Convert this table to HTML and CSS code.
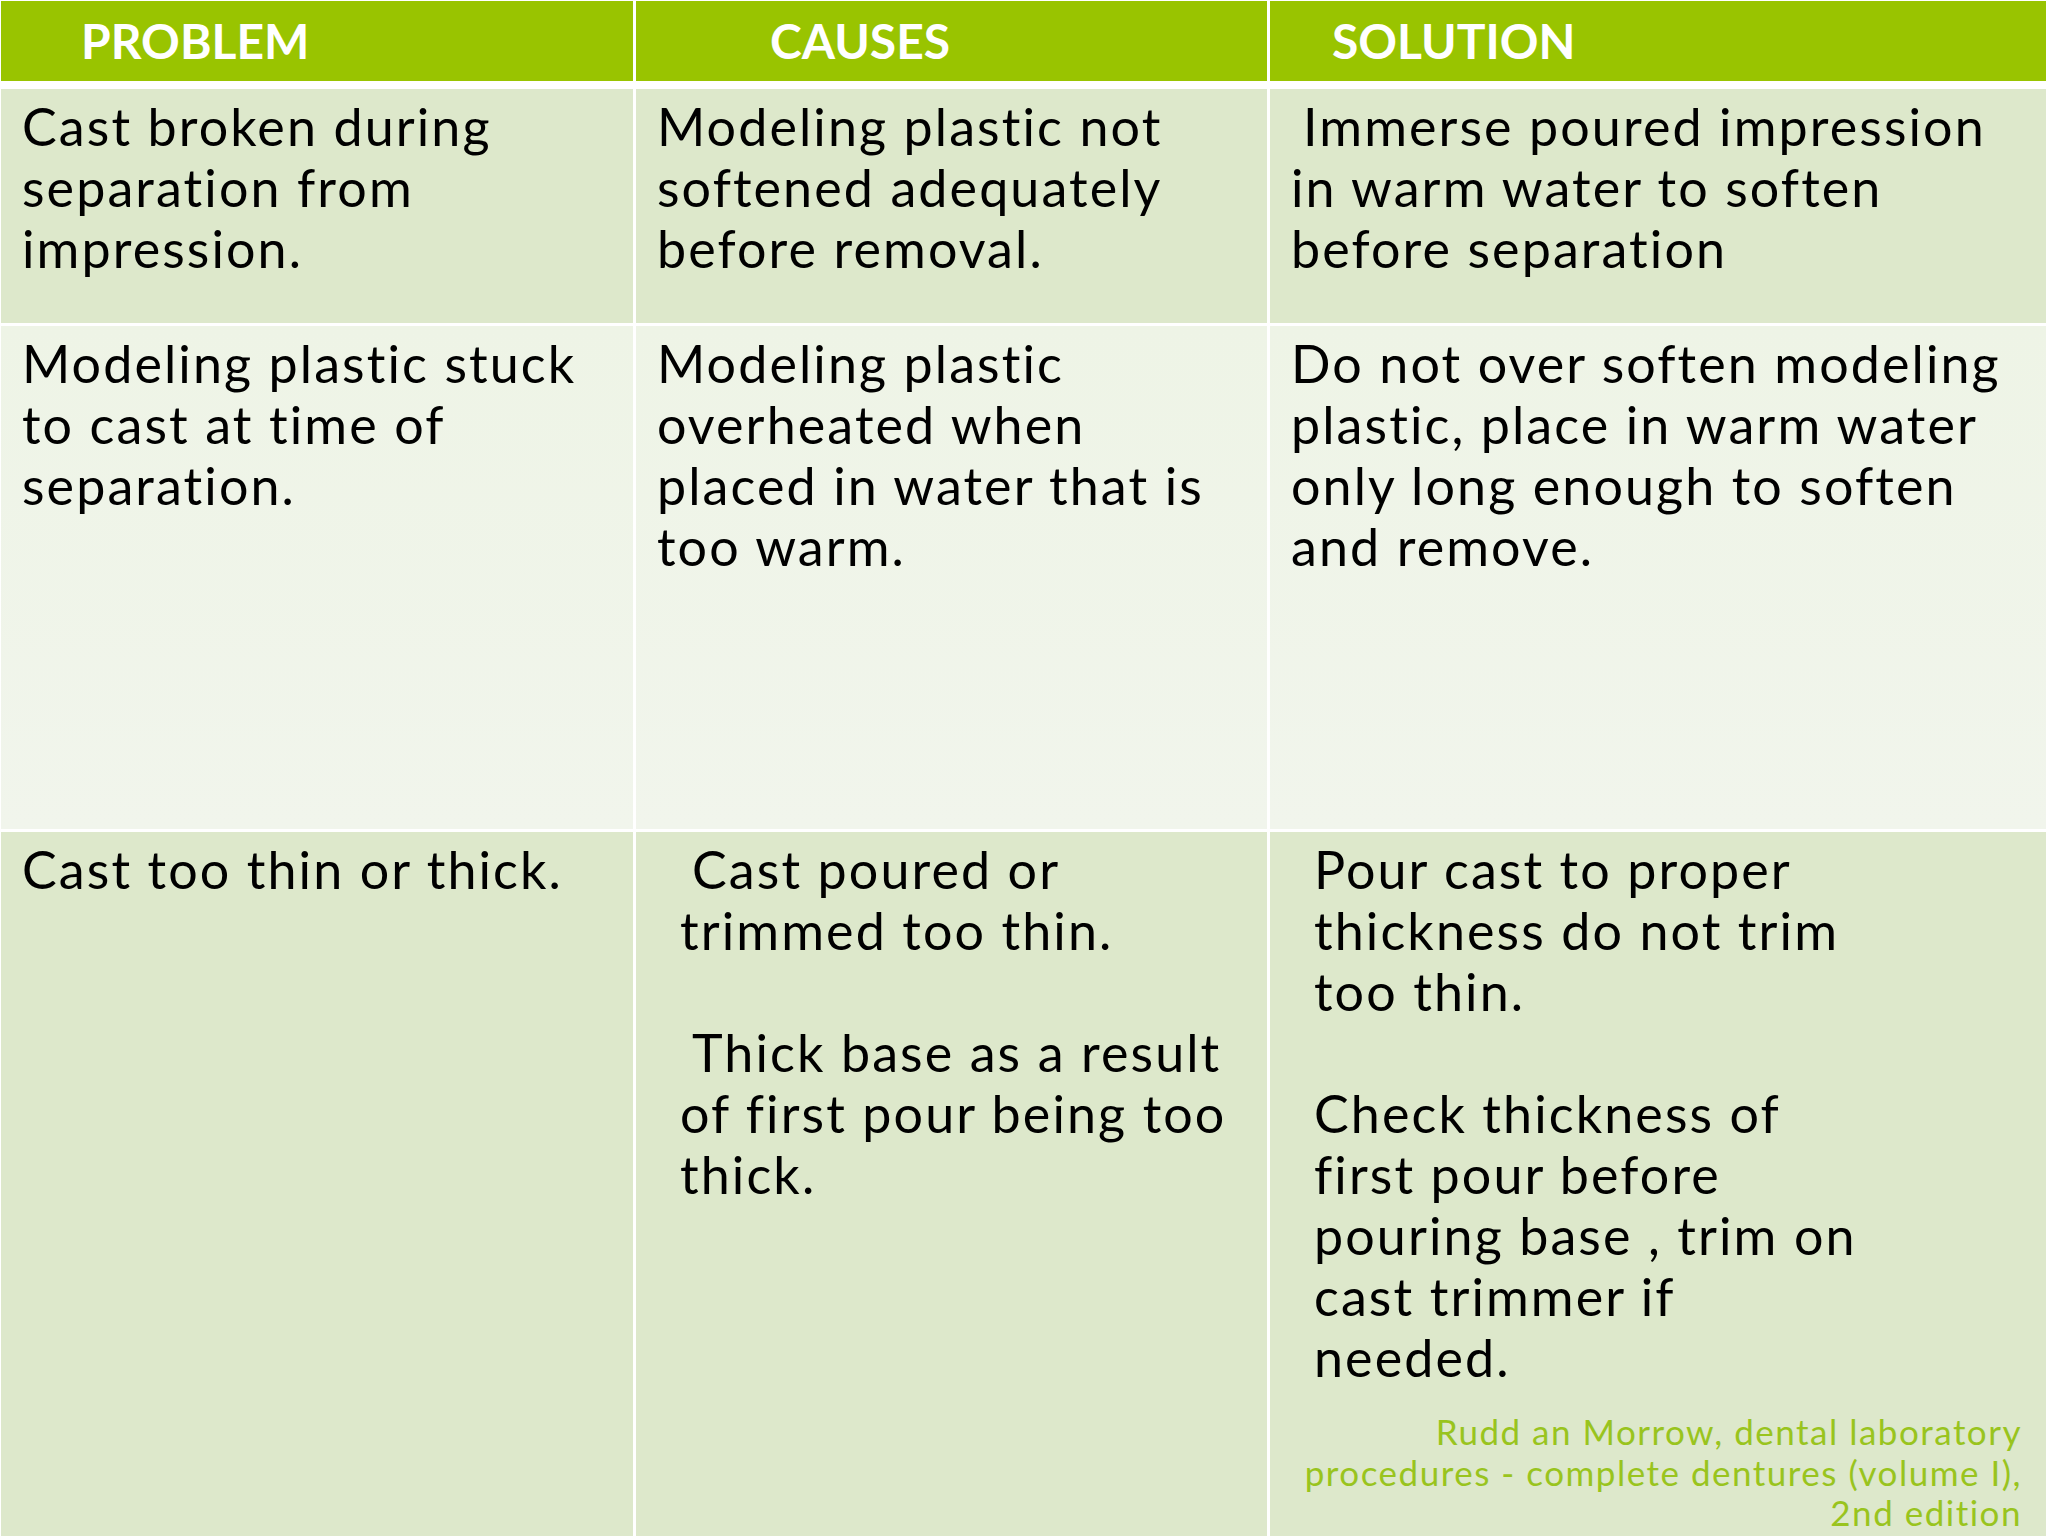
FILE: index.html
```html
<!DOCTYPE html>
<html lang="en">
<head>
<meta charset="utf-8">
<title>Problem / Causes / Solution</title>
<link rel="stylesheet" href="styles.css">
</head>
<body>
<div class="table">
  <div class="cell head head-problem">PROBLEM</div>
  <div class="cell head head-causes">CAUSES</div>
  <div class="cell head head-solution">SOLUTION</div>

  <div class="cell band">
    <p>Cast broken during<br>separation from<br>impression.</p>
  </div>
  <div class="cell band">
    <p>Modeling plastic not<br>softened adequately<br>before removal.</p>
  </div>
  <div class="cell band">
    <p><span class="lead"></span>Immerse poured impression<br>in warm water to soften<br>before separation</p>
  </div>

  <div class="cell light">
    <p>Modeling plastic stuck<br>to cast at time of<br>separation.</p>
  </div>
  <div class="cell light">
    <p>Modeling plastic<br>overheated when<br>placed in water that is<br>too warm.</p>
  </div>
  <div class="cell light">
    <p>Do not over soften modeling<br>plastic, place in warm water<br>only long enough to soften<br>and remove.</p>
  </div>

  <div class="cell band">
    <p>Cast too thin or thick.</p>
  </div>
  <div class="cell band indent">
    <p><span class="lead"></span>Cast poured or<br>trimmed too thin.</p>
    <p class="next"><span class="lead"></span>Thick base as a result<br>of first pour being too<br>thick.</p>
  </div>
  <div class="cell band indent">
    <p>Pour cast to proper<br>thickness do not trim<br>too thin.</p>
    <p class="next">Check thickness of<br>first pour before<br>pouring base , trim on<br>cast trimmer if<br>needed.</p>
    <p class="cite">Rudd an Morrow, dental laboratory<br>procedures - complete dentures (volume I),<br>2nd edition</p>
  </div>
</div>
</body>
</html>
```

FILE: styles.css
```css
html, body {
  margin: 0;
  padding: 0;
  background: #ffffff;
}

body {
  width: 2048px;
  height: 1536px;
  overflow: hidden;
  font-family: "Lato", "Liberation Sans", sans-serif;
  color: #000000;
}

.table {
  display: grid;
  grid-template-columns: 632px 631px 776px;
  grid-template-rows: 85px 234px 503px 704px;
  column-gap: 3px;
  row-gap: 3px;
  padding: 1px 0 0 1px;
}

.cell {
  padding: 7px 10px 0 21px;
  font-size: 52px;
  font-weight: 400;
  letter-spacing: 2.1px;
  line-height: 61px;
  white-space: nowrap;
}

.cell p {
  margin: 0;
}

.head {
  margin-bottom: 5px;
  background: #99c400;
  color: #ffffff;
  font-weight: 700;
  font-size: 48px;
  line-height: 80px;
  padding: 0;
  letter-spacing: 0;
}

.head-problem { padding-left: 80px; }
.head-causes { padding-left: 134px; }
.head-solution { padding-left: 62px; }

.band {
  background: #dde8cb;
}

.light {
  background: linear-gradient(180deg, #eef4e6 0%, #f1f5ec 100%);
}

.indent {
  padding-left: 44px;
}

.lead {
  display: inline-block;
  width: 12px;
}

.next {
  margin-top: 61px !important;
}

.cite {
  margin: 23px 14px 0 -40px !important;
  text-align: right;
  color: #99c41e;
  font-size: 35px;
  font-weight: 400;
  letter-spacing: 1.5px;
  line-height: 40.5px;
}
```
